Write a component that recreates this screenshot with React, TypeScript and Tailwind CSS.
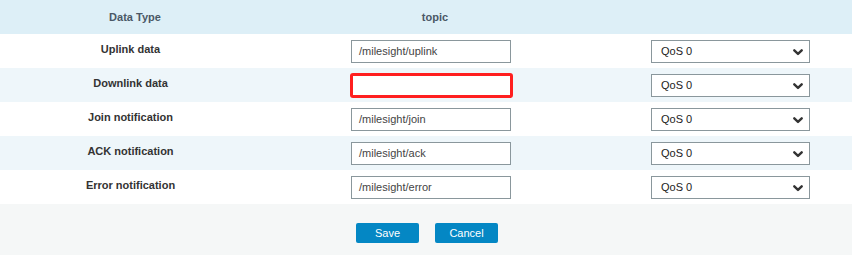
import React from "react";

const rows = [
  { label: "Uplink data", value: "/milesight/uplink" },
  { label: "Downlink data", value: "", error: true },
  { label: "Join notification", value: "/milesight/join" },
  { label: "ACK notification", value: "/milesight/ack" },
  { label: "Error notification", value: "/milesight/error" },
];

function Chevron() {
  return (
    <svg width="10" height="7" viewBox="0 0 10 7" className="absolute right-[6px] top-[8px]">
      <path d="M1.3 1.3 L5 4.9 L8.7 1.3" fill="none" stroke="#333" strokeWidth="2.4" strokeLinecap="round" strokeLinejoin="round" />
    </svg>
  );
}

export default function App() {
  return (
    <div className="w-[852px] h-[255px] bg-white text-[11px] overflow-hidden" style={{ fontFamily: '"Liberation Sans", Arial, sans-serif' }}>
      <div className="grid grid-cols-[270px_330px_1fr] h-[34px] bg-[#ddeff7] items-center font-bold text-[#4a5866]">
        <div className="text-center">Data Type</div>
        <div className="text-center">topic</div>
        <div />
      </div>
      {rows.map((r, i) => (
        <div
          key={r.label}
          className={`grid grid-cols-[261px_340px_1fr] h-[34px] ${i % 2 === 1 ? "bg-[#eef6fa]" : "bg-white"}`}
        >
          <div className="text-center font-bold text-[#333] pt-[8px] leading-[14px]">{r.label}</div>
          <div className="flex justify-center pt-[6px]">
            {r.error ? (
              <div className="w-[163px] h-[25px] -mt-[1px] border-[3px] border-[#ff1f1f] rounded-[3px] bg-white" />
            ) : (
              <div className="w-[160px] h-[23px] border border-[#8a979c] bg-white pl-[7px] leading-[21px] text-[#444]">
                {r.value}
              </div>
            )}
          </div>
          <div className="pl-[50px] pt-[6px]">
            <div className="relative w-[159px] h-[23px] border border-[#8a979c] bg-white pl-[9px] leading-[21px] text-[#222]">
              QoS 0
              <Chevron />
            </div>
          </div>
        </div>
      ))}
      <div className="h-[51px] bg-[#f5f7f7] flex gap-[16px] pl-[356px] pt-[19px]">
        <button className="w-[63px] h-[20px] bg-[#0487c4] rounded-[2px] text-white text-[11px] leading-[20px]">Save</button>
        <button className="w-[63px] h-[20px] bg-[#0487c4] rounded-[2px] text-white text-[11px] leading-[20px]">Cancel</button>
      </div>
    </div>
  );
}
